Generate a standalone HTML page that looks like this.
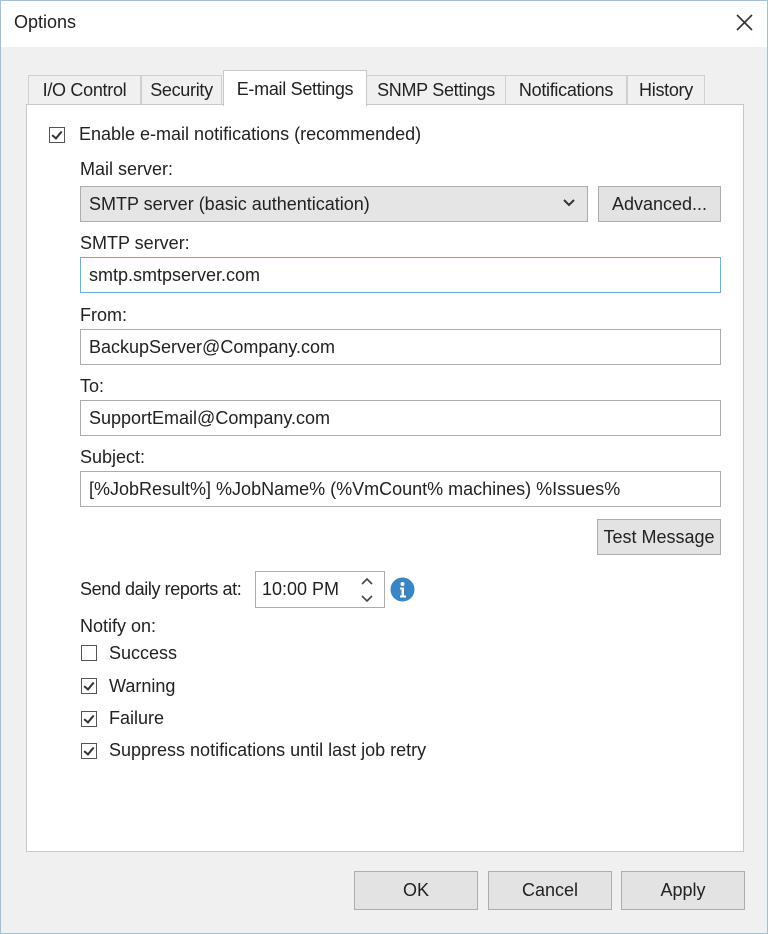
<!DOCTYPE html>
<html><head><meta charset="utf-8"><style>
*{box-sizing:border-box;margin:0;padding:0}
body{width:768px;height:934px;background:#f0f0f0;font-family:"Liberation Sans",sans-serif;font-size:18px;color:#222;position:relative;overflow:hidden}
.a{position:absolute;white-space:nowrap}
.win{position:absolute;left:0;top:0;width:768px;height:934px;border:1px solid #9cc3d6}
.title{position:absolute;left:1px;top:1px;width:766px;height:46px;background:#fff}
.tab{position:absolute;top:75px;height:30px;border:1px solid #d0d0d0;border-bottom:none;background:#f0f0f0;text-align:center;line-height:29px;font-size:18px;letter-spacing:-0.3px}
.panel{position:absolute;left:26px;top:104px;width:718px;height:748px;background:#fff;border:1px solid #c8c8c8}
.inp{position:absolute;left:80px;width:641px;height:36px;border:1px solid #adadad;background:#fff;padding-left:8px;line-height:34px;font-size:18px}
.btn{position:absolute;border:1px solid #adadad;background:#e3e3e3;text-align:center;font-size:18px}
.cb{position:absolute;width:16px;height:16px;border:1px solid #555;background:#fff}
.cb.k::after{content:"";position:absolute;left:4px;top:1px;width:4px;height:8px;border:solid #333;border-width:0 2px 2px 0;transform:rotate(40deg)}
.lbl{font-size:18px}
</style></head><body>
<div class="win"></div>
<div class="title"></div>
<div class="a" style="left:14px;top:12px;font-size:18px">Options</div>
<svg class="a" style="left:736px;top:14px" width="17" height="17"><path d="M1 1l15 15M16 1L1 16" stroke="#333" stroke-width="1.6"/></svg>

<div class="tab" style="left:28px;width:113px">I/O Control</div>
<div class="tab" style="left:141px;width:81px">Security</div>
<div class="tab" style="left:505px;width:122px">Notifications</div>
<div class="tab" style="left:627px;width:78px">History</div>
<div class="tab" style="left:366px;width:140px">SNMP Settings</div>
<div class="panel"></div>
<div class="tab" style="left:223px;top:70px;width:144px;height:36px;background:#fff;z-index:2;line-height:36px;border-color:#c8c8c8">E-mail Settings</div>

<div class="cb k" style="left:49px;top:127px"></div>
<div class="a lbl" style="left:79px;top:124px">Enable e-mail notifications (recommended)</div>
<div class="a lbl" style="left:80px;top:159px">Mail server:</div>
<div class="inp" style="top:186px;width:508px;background:#e5e5e5">SMTP server (basic authentication)</div>
<svg class="a" style="left:563px;top:199px" width="12" height="8"><path d="M1 1l5 5 5-5" fill="none" stroke="#333" stroke-width="2"/></svg>
<div class="btn" style="left:598px;top:186px;width:123px;height:36px;line-height:34px">Advanced...</div>
<div class="a lbl" style="left:80px;top:233px">SMTP server:</div>
<div class="inp" style="top:257px;border-color:#6fb0cc">smtp.smtpserver.com</div>
<div class="a lbl" style="left:80px;top:305px">From:</div>
<div class="inp" style="top:329px">BackupServer@Company.com</div>
<div class="a lbl" style="left:80px;top:376px">To:</div>
<div class="inp" style="top:400px">SupportEmail@Company.com</div>
<div class="a lbl" style="left:80px;top:447px">Subject:</div>
<div class="inp" style="top:471px">[%JobResult%] %JobName% (%VmCount% machines) %Issues%</div>
<div class="btn" style="left:597px;top:519px;width:124px;height:36px;line-height:34px">Test Message</div>

<div class="a lbl" style="left:80px;top:579px;letter-spacing:-0.4px">Send daily reports at:</div>
<div class="inp" style="left:255px;top:571px;width:130px;height:37px;padding-left:6px">10:00 PM</div>
<svg class="a" style="left:359px;top:575px" width="16" height="30"><path d="M3 9l5-5 5 5M3 21l5 5 5-5" fill="none" stroke="#444" stroke-width="1.6"/></svg>
<svg class="a" style="left:390px;top:577px" width="25" height="25"><circle cx="12.5" cy="12.5" r="12" fill="#3a86c4"/><circle cx="12.5" cy="7" r="2" fill="#fff"/><path d="M10 10.5h4v8h2v2h-6v-2h1.5v-6H10z" fill="#fff"/></svg>
<div class="a lbl" style="left:80px;top:616px">Notify on:</div>
<div class="cb" style="left:81px;top:645px"></div>
<div class="a lbl" style="left:109px;top:643px">Success</div>
<div class="cb k" style="left:81px;top:678px"></div>
<div class="a lbl" style="left:109px;top:676px">Warning</div>
<div class="cb k" style="left:81px;top:711px"></div>
<div class="a lbl" style="left:109px;top:708px">Failure</div>
<div class="cb k" style="left:81px;top:743px"></div>
<div class="a lbl" style="left:109px;top:740px">Suppress notifications until last job retry</div>

<div class="btn" style="left:354px;top:871px;width:124px;height:39px;line-height:37px">OK</div>
<div class="btn" style="left:488px;top:871px;width:124px;height:39px;line-height:37px">Cancel</div>
<div class="btn" style="left:621px;top:871px;width:124px;height:39px;line-height:37px">Apply</div>
</body></html>
